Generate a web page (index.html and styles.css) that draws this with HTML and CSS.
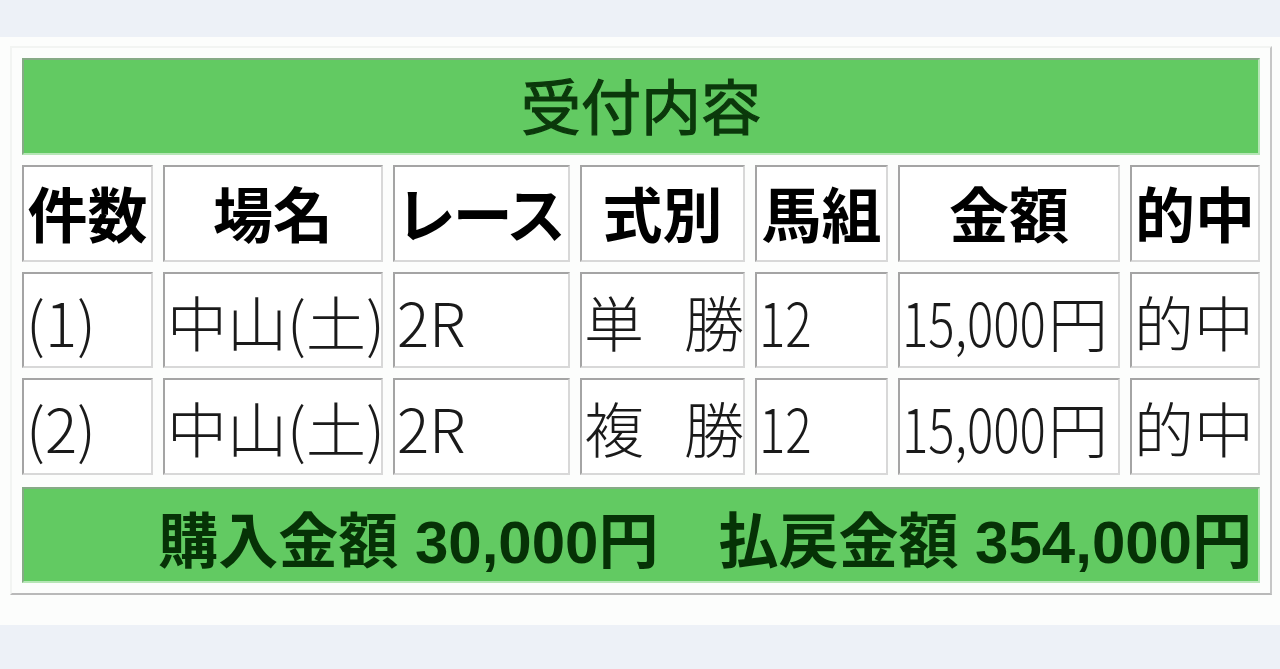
FILE: index.html
```html
<!DOCTYPE html>
<html lang="ja">
<head>
<meta charset="utf-8">
<title>受付内容</title>
<link rel="stylesheet" href="styles.css">
</head>
<body>
<div class="sheet">
  <div class="receipt">
    <div class="title">受付内容</div>

    <div class="cell th">件数</div>
    <div class="cell th">場名</div>
    <div class="cell th">レース</div>
    <div class="cell th">式別</div>
    <div class="cell th">馬組</div>
    <div class="cell th">金額</div>
    <div class="cell th">的中</div>

    <div class="cell">(1)</div>
    <div class="cell">中山(土)</div>
    <div class="cell">2R</div>
    <div class="cell shiki">単　勝</div>
    <div class="cell"><span class="num">12</span></div>
    <div class="cell"><span class="num amt">15,000</span>円</div>
    <div class="cell">的中</div>

    <div class="cell">(2)</div>
    <div class="cell">中山(土)</div>
    <div class="cell">2R</div>
    <div class="cell shiki">複　勝</div>
    <div class="cell"><span class="num">12</span></div>
    <div class="cell"><span class="num amt">15,000</span>円</div>
    <div class="cell">的中</div>

    <div class="total">購入金額 30,000円　払戻金額 354,000円</div>
  </div>
</div>
</body>
</html>
```

FILE: styles.css
```css
html, body {
  margin: 0;
  padding: 0;
  height: 100%;
}

body {
  background: #edf1f7;
  font-family: "Noto Sans CJK JP", sans-serif;
  color: #111;
}

.sheet {
  margin-top: 37px;
  height: 588px;
  box-sizing: border-box;
  padding: 9px 0 0 10px;
  background: #fcfdfc;
}

.receipt {
  display: grid;
  grid-template-columns: 131px 220px 177px 165px 133px 222px 130px;
  grid-template-rows: 97px 97px 96px 97px 98px;
  gap: 10px;
  padding: 10px;
  width: max-content;
  border: 2px solid;
  border-color: #f2f4f2 #c6c6c6 #b9b9b9 #f2f4f2;
}

.title,
.total {
  grid-column: 1 / -1;
  display: flex;
  align-items: center;
  box-sizing: border-box;
  background: #62ca62;
  border: 2px solid;
  border-color: #86aa86 #b6e6b6 #b6e6b6 #86aa86;
  font-family: "Noto Sans CJK JP", sans-serif;
  font-size: 60px;
  white-space: nowrap;
}

.title {
  justify-content: center;
  color: #0b380b;
  padding-bottom: 6px;
  -webkit-text-stroke: 1.2px #0b380b;
}

.total {
  margin-top: 2px;
  justify-content: flex-end;
  padding: 2px 6px 0 0;
  font-family: "Liberation Sans", "Noto Sans CJK JP", sans-serif;
  font-weight: 700;
  color: #063206;
}

.cell {
  display: flex;
  align-items: center;
  box-sizing: border-box;
  padding-left: 2px;
  background: #fff;
  border: 2px solid;
  border-color: #a4a4a4 #d8d8d8 #d8d8d8 #a4a4a4;
  font-size: 60px;
  font-weight: 300;
  white-space: nowrap;
  color: #1a1a1a;
}

.th {
  justify-content: center;
  padding: 0 0 4px 0;
  font-weight: 700;
  font-feature-settings: "palt";
  color: #000;
}

.shiki {
  letter-spacing: -10px;
}

.num {
  display: inline-block;
  transform: scaleX(0.82);
  transform-origin: 0 50%;
}

.amt {
  width: 146px;
}
```
